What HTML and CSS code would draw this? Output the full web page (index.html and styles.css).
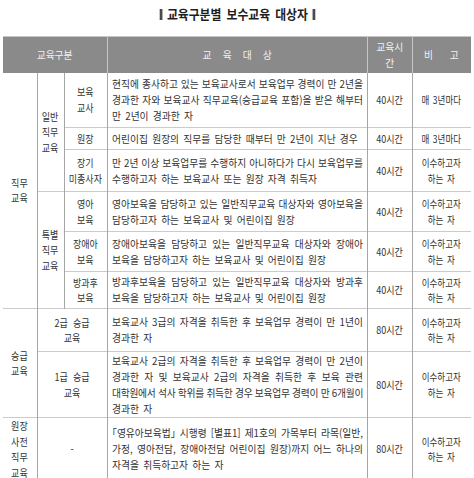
FILE: index.html
```html
<!DOCTYPE html>
<html lang="ko">
<head>
<meta charset="utf-8">
<title>교육구분별 보수교육 대상자</title>
<link rel="stylesheet" href="styles.css">
</head>
<body>
<div class="page">
  <h1 class="title"><span class="tt"><span class="bar"></span>교육구분별 보수교육 대상자<span class="bar"></span></span></h1>
  <table class="tbl">
    <colgroup>
      <col class="c1"><col class="c2"><col class="c3"><col class="c4"><col class="c5"><col class="c6">
    </colgroup>
    <thead>
      <tr>
        <th colspan="3"><div class="t">교육구분</div></th>
        <th><div class="t sp1">교 육 대 상</div></th>
        <th><div class="t">교육시<br>간</div></th>
        <th><div class="t sp2">비 고</div></th>
      </tr>
    </thead>
    <tbody>
      <tr class="r55">
        <td rowspan="6" class="first lab"><div class="t">직무<br>교육</div></td>
        <td rowspan="3" class="lab"><div class="t">일반<br>직무<br>교육</div></td>
        <td class="lab"><div class="t">보육<br>교사</div></td>
        <td class="txt"><div class="t">
          <span class="ln">현직에 종사하고 있는 보육교사로서 보육업무 경력이 만 2년을</span>
          <span class="ln">경과한 자와 보육교사 직무교육(승급교육 포함)을 받은 해부터</span>
          <span class="ln end">만 2년이 경과한 자</span>
        </div></td>
        <td class="num"><div class="t">40시간</div></td>
        <td class="rem"><div class="t">매 3년마다</div></td>
      </tr>
      <tr class="r22">
        <td class="lab"><div class="t">원장</div></td>
        <td class="txt"><div class="t">
          <span class="ln end">어린이집 원장의 직무를 담당한 때부터 만 2년이 지난 경우</span>
        </div></td>
        <td class="num"><div class="t">40시간</div></td>
        <td class="rem"><div class="t">매 3년마다</div></td>
      </tr>
      <tr class="r42">
        <td class="lab"><div class="t">장기<br>미종사자</div></td>
        <td class="txt"><div class="t">
          <span class="ln">만 2년 이상 보육업무를 수행하지 아니하다가 다시 보육업무를</span>
          <span class="ln end">수행하고자 하는 보육교사 또는 원장 자격 취득자</span>
        </div></td>
        <td class="num"><div class="t">40시간</div></td>
        <td class="rem"><div class="t">이수하고자<br>하는 자</div></td>
      </tr>
      <tr class="r40">
        <td rowspan="3" class="lab"><div class="t">특별<br>직무<br>교육</div></td>
        <td class="lab"><div class="t">영아<br>보육</div></td>
        <td class="txt"><div class="t">
          <span class="ln">영아보육을 담당하고 있는 일반직무교육 대상자와 영아보육을</span>
          <span class="ln end">담당하고자 하는 보육교사 및 어린이집 원장</span>
        </div></td>
        <td class="num"><div class="t">40시간</div></td>
        <td class="rem"><div class="t">이수하고자<br>하는 자</div></td>
      </tr>
      <tr class="r40">
        <td class="lab"><div class="t">장애아<br>보육</div></td>
        <td class="txt"><div class="t">
          <span class="ln">장애아보육을 담당하고 있는 일반직무교육 대상자와 장애아</span>
          <span class="ln end">보육을 담당하고자 하는 보육교사 및 어린이집 원장</span>
        </div></td>
        <td class="num"><div class="t">40시간</div></td>
        <td class="rem"><div class="t">이수하고자<br>하는 자</div></td>
      </tr>
      <tr class="r37">
        <td class="lab"><div class="t">방과후<br>보육</div></td>
        <td class="txt"><div class="t">
          <span class="ln">방과후보육을 담당하고 있는 일반직무교육 대상자와 방과후</span>
          <span class="ln end">보육을 담당하고자 하는 보육교사 및 어린이집 원장</span>
        </div></td>
        <td class="num"><div class="t">40시간</div></td>
        <td class="rem"><div class="t">이수하고자<br>하는 자</div></td>
      </tr>
      <tr class="r43">
        <td rowspan="2" class="first lab"><div class="t">승급<br>교육</div></td>
        <td colspan="2" class="lab"><div class="t">2급 승급<br>교육</div></td>
        <td class="txt"><div class="t">
          <span class="ln">보육교사 3급의 자격을 취득한 후 보육업무 경력이 만 1년이</span>
          <span class="ln end">경과한 자</span>
        </div></td>
        <td class="num"><div class="t">80시간</div></td>
        <td class="rem"><div class="t">이수하고자<br>하는 자</div></td>
      </tr>
      <tr class="r66">
        <td colspan="2" class="lab"><div class="t">1급 승급<br>교육</div></td>
        <td class="txt"><div class="t">
          <span class="ln">보육교사 2급의 자격을 취득한 후 보육업무 경력이 만 2년이</span>
          <span class="ln">경과한 자 및 보육교사 2급의 자격을 취득한 후 보육 관련</span>
          <span class="ln dense">대학원에서 석사 학위를 취득한 경우 보육업무 경력이 만 6개월이</span>
          <span class="ln end">경과한 자</span>
        </div></td>
        <td class="num"><div class="t">80시간</div></td>
        <td class="rem"><div class="t">이수하고자<br>하는 자</div></td>
      </tr>
      <tr class="r62">
        <td class="first lab"><div class="t">원장<br>사전<br>직무<br>교육</div></td>
        <td colspan="2" class="lab"><div class="t">-</div></td>
        <td class="txt"><div class="t">
          <span class="ln"><span class="word">｢영유아보육법｣</span> 시행령 <span class="word">[별표1]</span> 제1호의 가목부터 라목(일반,</span>
          <span class="ln">가정, 영아전담, 장애아전담 어린이집 원장)까지 어느 하나의</span>
          <span class="ln end">자격을 취득하고자 하는 자</span>
        </div></td>
        <td class="num"><div class="t">80시간</div></td>
        <td class="rem"><div class="t">이수하고자<br>하는 자</div></td>
      </tr>
    </tbody>
  </table>
</div>
</body>
</html>
```

FILE: styles.css
```css
* { box-sizing: border-box; }

html, body {
  margin: 0;
  background: #ffffff;
  overflow: hidden;
}

body {
  font-family: "Noto Sans CJK KR", "Noto Sans", sans-serif;
  color: #333333;
}

.page {
  width: 474px;
  padding: 0 3px;
}

.title {
  margin: 0;
  padding: 4px 0 12px;
  line-height: 20px;
  font-size: 13px;
  font-weight: 700;
  text-align: center;
  color: #1e1e1e;
}

.tt {
  display: inline-block;
  transform: scaleX(0.91);
  transform-origin: 50% 50%;
  word-spacing: 2px;
}

.bar {
  display: inline-block;
  width: 3px;
  height: 11px;
  margin: 0 5px;
  background: #4a4a4a;
  vertical-align: -1px;
}

.tbl {
  width: 468px;
  border-collapse: collapse;
  table-layout: fixed;
  font-size: 10.5px;
}

col.c1 { width: 34px; }
col.c2 { width: 27px; }
col.c3 { width: 43px; }
col.c4 { width: 260px; }
col.c5 { width: 45px; }
col.c6 { width: 59px; }

th, td {
  padding: 0;
  text-align: center;
  vertical-align: middle;
  font-weight: 400;
}

th {
  height: 36px;
  background: #8a8a8a;
  color: #f2f2f2;
  line-height: 15.5px;
  border-top: 1px solid #c6c6c6;
  border-left: 1px solid #c6c6c6;
}

th:first-child { border-left: 0; }

td {
  line-height: 15.5px;
  border-top: 1px solid #cbcbcb;
  border-left: 1px solid #a6a6a6;
}

td.first { border-left: 0; }

tbody tr:first-child td { border-top: 0; }

/* condensed lettering, as in the source document */
.t {
  width: 107.5%;
  margin-left: -3.75%;
  transform: scaleX(0.93);
  transform-origin: 50% 50%;
}

.sp1 { word-spacing: 9px; }
.sp2 { word-spacing: 15px; }

td.lab .t {
  width: 116%;
  margin-left: -8%;
  transform: scaleX(0.86);
  word-spacing: 3px;
}

td.num .t {
  width: 116%;
  margin-left: -8%;
  transform: scaleX(0.86);
}

td.rem .t {
  width: 124%;
  margin-left: -12%;
  transform: scaleX(0.81);
  word-spacing: 1.5px;
}

td.txt {
  padding: 0 4px;
  line-height: 16px;
}

td.txt .t {
  margin-left: 0;
  transform-origin: 0 50%;
}

.ln {
  display: block;
  text-align: justify;
  text-align-last: justify;
  white-space: nowrap;
}

.ln.dense { letter-spacing: -0.3px; }

.ln.end {
  text-align-last: left;
  word-spacing: 1.6px;
}

.word { display: inline-block; }

.r22 { height: 22px; }
.r37 { height: 37px; }
.r40 { height: 40px; }
.r42 { height: 42px; }
.r43 { height: 43px; }
.r55 { height: 55px; }
.r62 { height: 62px; }
.r66 { height: 66px; }
```
